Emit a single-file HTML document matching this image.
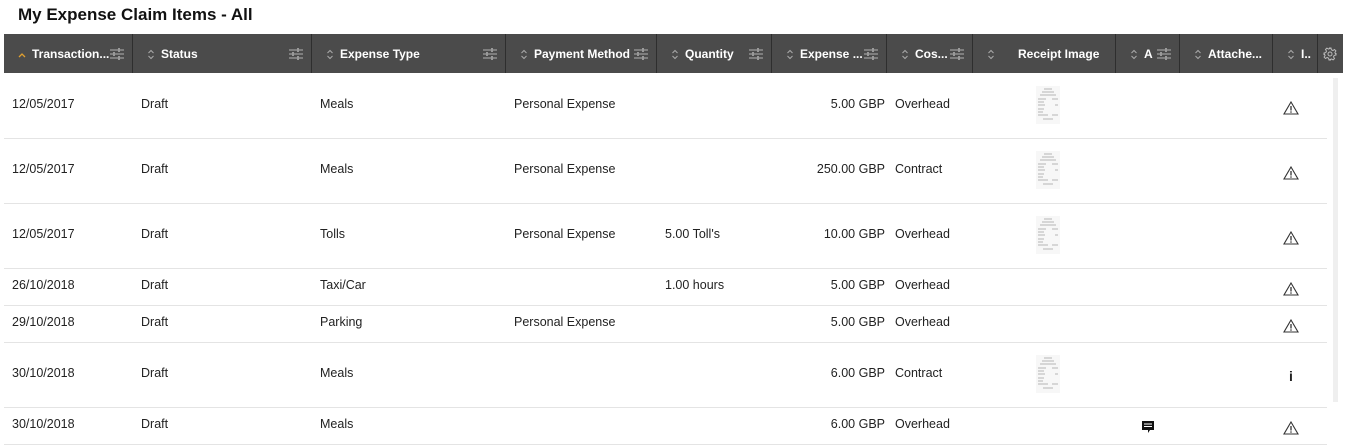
<!DOCTYPE html>
<html><head><meta charset="utf-8"><style>
body{margin:0;width:1347px;height:446px;background:#fff;font-family:"Liberation Sans",sans-serif;position:relative;overflow:hidden;color:#222}
.t{position:absolute;left:18px;top:5px;font-size:17px;font-weight:bold;color:#111}
.hd{position:absolute;left:4px;top:34px;width:1339px;height:39px;background:#4b4b4b}
.hc{position:absolute;top:34px;height:39px;border-right:1px solid #2e2e2e;color:#fff;font-size:12px;font-weight:bold;line-height:40px;box-sizing:border-box}
.hc svg{position:absolute}
.c{position:absolute;font-size:12.5px;color:#222}
.bd{position:absolute;left:4px;width:1323px;height:1px;background:#e4e4e4}
.sb{position:absolute;left:1333px;top:78px;width:5px;height:324px;background:#efefef}
</style></head><body>
<div class="t">My Expense Claim Items - All</div>
<div class="hd"></div>
<div id="h"></div>
<div class="sb"></div>
<div id="b"></div>
<script>
const cols=[[4,133,'Transaction...',1,1],[133,312,'Status',0,1],[312,506,'Expense Type',0,1],[506,657,'Payment Method',0,1],[657,772,'Quantity',0,1],[772,887,'Expense ...',0,1],[887,973,'Cos...',0,1],[973,1116,'Receipt Image',0,0],[1116,1180,'A',0,1],[1180,1273,'Attache...',0,0],[1273,1318,'I..',0,0]];
let h='';
const filt='<svg width="14" height="12" viewBox="0 0 14 12" style="top:14px;right:8px"><g stroke="#999" stroke-width="1.3"><line x1="0" y1="2" x2="14" y2="2"/><line x1="0" y1="6" x2="14" y2="6"/><line x1="0" y1="10" x2="14" y2="10"/></g><g fill="#999"><rect x="8" y="0" width="2" height="4"/><rect x="3" y="4" width="2" height="4"/><rect x="8" y="8" width="2" height="4"/></g></svg>';
cols.forEach((c,i)=>{
 const w=c[1]-c[0];
 const sort=c[3]?'<svg width="8" height="6" style="left:14px;top:18px"><path d="M1 5L4 2L7 5" stroke="#e0a030" fill="none" stroke-width="1.3"/></svg>':'<svg width="8" height="11" style="left:14px;top:15px"><path d="M1.5 4L4 1.5L6.5 4M1.5 7L4 9.5L6.5 7" stroke="#aaa" fill="none"/></svg>';
 const center=c[2]=='Receipt Image';
 h+=`<div class="hc" style="left:${c[0]}px;width:${w}px">${sort}<span style="position:absolute;left:${center?45:28}px">${c[2]}</span>${c[4]?filt:''}</div>`;
});
h+='<svg style="position:absolute;left:1323px;top:47px" width="14" height="14" viewBox="0 0 14 14"><circle cx="7" cy="7" r="2" fill="none" stroke="#bbb"/><path d="M6 1h2l.4 1.8 1.5.7 1.6-1 1.4 1.4-1 1.6.7 1.5L13 6v2l-1.8.4-.7 1.5 1 1.6-1.4 1.4-1.6-1-1.5.7L8 13H6l-.4-1.8-1.5-.7-1.6 1-1.4-1.4 1-1.6-.7-1.5L1 8V6l1.8-.4.7-1.5-1-1.6 1.4-1.4 1.6 1 1.5-.7z" fill="none" stroke="#bbb"/></svg>';
document.getElementById('h').innerHTML=h;
const rows=[[74,138,'12/05/2017','Meals','Personal Expense','','5.00 GBP','Overhead',1,'w',0],
[138,203,'12/05/2017','Meals','Personal Expense','','250.00 GBP','Contract',1,'w',0],
[203,268,'12/05/2017','Tolls','Personal Expense',"5.00 Toll's",'10.00 GBP','Overhead',1,'w',0],
[268,305,'26/10/2018','Taxi/Car','','1.00 hours','5.00 GBP','Overhead',0,'w',0],
[305,342,'29/10/2018','Parking','Personal Expense','','5.00 GBP','Overhead',0,'w',0],
[342,407,'30/10/2018','Meals','','','6.00 GBP','Contract',1,'i',0],
[407,444,'30/10/2018','Meals','','','6.00 GBP','Overhead',0,'w',1]];
const warn='<svg width="16" height="14" viewBox="0 0 16 14"><path d="M8 1L15 13H1Z" fill="none" stroke="#333" stroke-width="1.1"/><path d="M8 5v4.5" stroke="#333" stroke-width="1.3"/><circle cx="8" cy="11" r=".8" fill="#333"/></svg>';
const rec='<svg width="26" height="38" viewBox="0 0 26 38"><rect x="1" width="24" height="38" fill="#f7f7f7"/><g stroke="#999" stroke-width=".7"><line x1="9" y1="3" x2="17" y2="3"/><line x1="7" y1="6" x2="19" y2="6"/><line x1="5" y1="9" x2="21" y2="9"/><line x1="3" y1="13" x2="11" y2="13"/><line x1="17" y1="13" x2="23" y2="13"/><line x1="3" y1="16" x2="9" y2="16"/><line x1="3" y1="19" x2="10" y2="19"/><line x1="20" y1="19" x2="23" y2="19"/><line x1="3" y1="23" x2="9" y2="23"/><line x1="3" y1="26" x2="8" y2="26"/><line x1="3" y1="29" x2="13" y2="29"/><line x1="17" y1="29" x2="23" y2="29"/><line x1="8" y1="33" x2="18" y2="33"/></g></svg>';
let b='';
rows.forEach(r=>{
 const m=(r[0]+r[1])/2, ty=m-9;
 b+=`<div class="c" style="left:12px;top:${ty}px">${r[2]}</div><div class="c" style="left:141px;top:${ty}px">Draft</div><div class="c" style="left:320px;top:${ty}px">${r[3]}</div><div class="c" style="left:514px;top:${ty}px">${r[4]}</div><div class="c" style="left:665px;top:${ty}px">${r[5]}</div><div class="c" style="right:${1347-885}px;top:${ty}px">${r[6]}</div><div class="c" style="left:895px;top:${ty}px">${r[7]}</div>`;
 if(r[8]) b+=`<div style="position:absolute;left:1035px;top:${m-20}px">${rec}</div>`;
 if(r[9]=='w') b+=`<div style="position:absolute;left:1283px;top:${m-5}px">${warn}</div>`;
 else b+=`<div class="c" style="left:1289px;top:${m-7}px;font-weight:bold;font-size:14px">i</div>`;
 if(r[10]) b+=`<svg style="position:absolute;left:1141px;top:${m-5}px" width="14" height="13" viewBox="0 0 14 13"><path d="M1 0h12v9H9l-2 3v-3H1z" fill="#111"/><g stroke="#fff"><line x1="3" y1="3" x2="11" y2="3"/><line x1="3" y1="5.5" x2="11" y2="5.5"/></g></svg>`;
 b+=`<div class="bd" style="top:${r[1]}px"></div>`;
});
document.getElementById('b').innerHTML=b;
</script>
</body></html>
